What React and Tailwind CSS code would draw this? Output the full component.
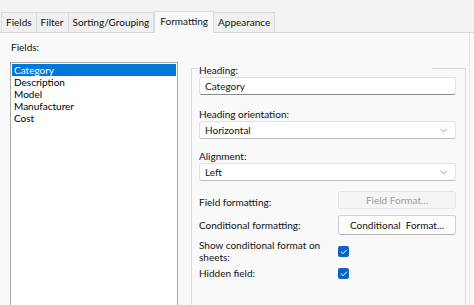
import { ChevronDown, Check } from 'lucide-react';

const tabs = ['Fields', 'Filter', 'Sorting/Grouping', 'Formatting', 'Appearance'];
const fields = ['Category', 'Description', 'Model', 'Manufacturer', 'Cost'];

const font = { fontFamily: 'Lato, "Open Sans", sans-serif' };

const Select = ({ value }) => (
    <div className="flex h-[18px] items-center justify-between rounded-[3px] border border-[#e2e2e2] border-b-[#bdbdbd] bg-white pl-[5px] pr-[6px]">
        <span>{value}</span>
        <ChevronDown size={11} strokeWidth={1.5} className="text-[#707070]" />
    </div>
);

const CheckBox = () => (
    <div className="flex h-[11px] w-[11px] items-center justify-center rounded-[2px] bg-[#0b63c4]">
        <Check size={8} strokeWidth={3} className="text-white" />
    </div>
);

export default function App() {
    return (
        <div className="h-[305px] w-[474px] overflow-hidden bg-[#f3f3f3] text-[10px] leading-[13px] text-[#111]" style={font}>
            {/* tabs */}
            <div className="flex h-[33px] items-end border-b border-[#dadada] pl-[1px]">
                {tabs.map((t) =>
                    t === 'Formatting' ? (
                        <div key={t} className="-mb-[1px] flex h-[22px] items-center border border-b-0 border-[#dadada] bg-[#f9f9f9] px-[5px] pb-[2px]">
                            {t}
                        </div>
                    ) : (
                        <div key={t} className="flex h-[20px] items-center border-r border-t border-[#dadada] bg-[#f0f0f0] px-[4px] first:border-l">
                            {t}
                        </div>
                    )
                )}
            </div>

            {/* page */}
            <div className="flex h-[272px] bg-[#f9f9f9] pl-[10px] pr-[4px]">
                <div className="flex w-[168px] flex-col">
                    <div className="mt-[8px] pl-[1px]">Fields:</div>
                    <div className="mt-[8px] flex-1 border border-b-0 border-[#a8a8a8] bg-white p-[1px] leading-[12px]">
                        {fields.map((f, i) => (
                            <div key={f} className={i === 0 ? 'bg-[#0078d7] pl-[2px] text-white' : 'pl-[2px] text-black'}>
                                {f}
                            </div>
                        ))}
                    </div>
                </div>

                <div className="ml-[13px] mt-[35px] flex flex-1 flex-col">
                    <div className="flex">
                        <div className="h-[1px] w-[7px] bg-[#dcdcdc]" />
                        <div className="flex-1" />
                        <div className="h-[1px] w-[34px] bg-[#dcdcdc]" />
                    </div>
                    <div className="flex flex-1 flex-col border-l border-r border-[#dcdcdc] pl-[7px] pr-[9px]">
                        <div className="-mt-[5px]">Heading:</div>
                        <div className="flex h-[18px] items-center rounded-[3px] border border-[#e2e2e2] border-b-[#8a8a8a] bg-white pl-[5px]">
                            Category
                        </div>

                        <div className="mt-[13px]">Heading orientation:</div>
                        <Select value="Horizontal" />

                        <div className="mt-[11px]">Alignment:</div>
                        <Select value="Left" />

                        <div className="mt-[10px] flex items-center justify-between">
                            <span className="pt-[4px]">Field formatting:</span>
                            <div className="flex h-[18px] w-[118px] items-center justify-center rounded-[3px] border border-[#e4e4e4] bg-[#f5f5f5] text-[#9d9d9d]">
                                Field Format...
                            </div>
                        </div>

                        <div className="mt-[6px] flex items-center justify-between">
                            <span>Conditional formatting:</span>
                            <div className="flex h-[20px] w-[118px] items-center justify-center rounded-[3px] border border-[#d0d0d0] border-b-[#b5b5b5] bg-[#fdfdfd]">
                                Conditional&nbsp; Format...
                            </div>
                        </div>

                        <div className="mt-[4px] flex items-start">
                            <span className="w-[139px] leading-[12px]">
                                Show conditional format on sheets:
                            </span>
                            <div className="mt-[7px]">
                                <CheckBox />
                            </div>
                        </div>

                        <div className="mt-[4px] flex items-center">
                            <span className="w-[139px]">Hidden field:</span>
                            <CheckBox />
                        </div>
                    </div>
                </div>
                <div className="ml-[3px] w-[1px] bg-[#e4e4e4]" />
            </div>
        </div>
    );
}
